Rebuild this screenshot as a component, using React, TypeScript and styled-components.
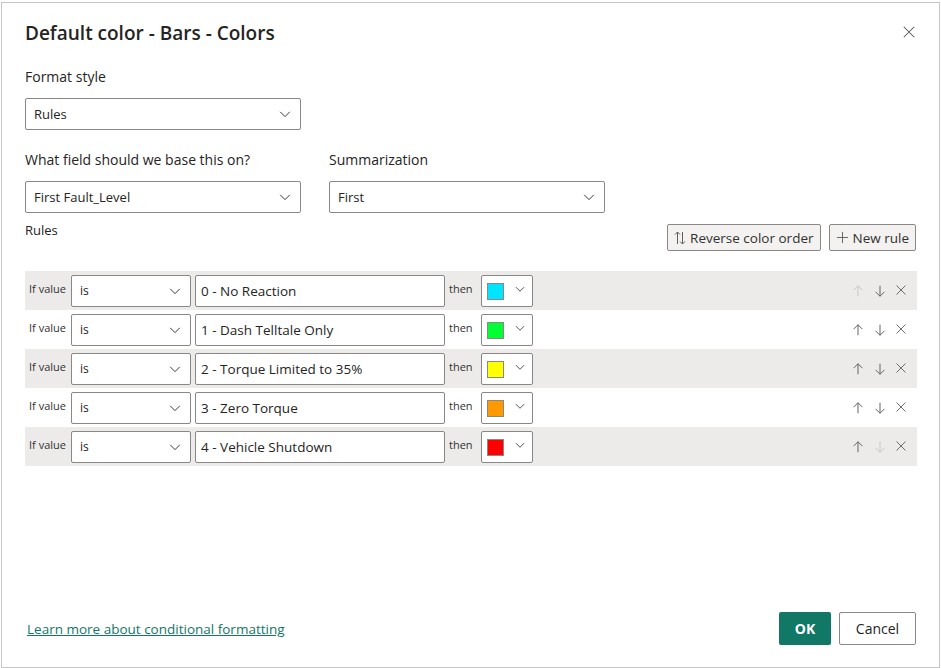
import React from "react";
import styled, { createGlobalStyle } from "styled-components";

const Global = createGlobalStyle`
  body { margin: 0; font-family: "Segoe UI", "Open Sans", "Noto Sans", sans-serif; color: #252423; background: #fff; }
`;

const Page = styled.div`
  width: 941px; height: 668px; box-sizing: border-box; padding-top: 2px; background: #fff; position: relative; overflow: hidden;
`;
const Dialog = styled.div`
  box-sizing: border-box; height: 666px; margin-left: 1px; width: 939px;
  border: 1px solid #c8c6c4; display: flex; flex-direction: column; padding: 0 23px 0 23px; position: relative;
`;
const Title = styled.h1`
  font-size: 19px; font-weight: 600; margin: 17px 0 0; line-height: 26px; color: #252423;
`;
const Close = styled.button`
  position: absolute; right: 20px; top: 20px; border: 0; background: none; padding: 0; width: 20px; height: 20px; color: #555;
`;
const Label = styled.div`
  font-size: 14px; line-height: 20px; color: #252423;
`;
const Field = styled.div<{ $mt: number }>`
  display: flex; flex-direction: column; gap: 11px; margin-top: ${p => p.$mt}px;
`;
const Select = styled.div<{ $w: number; $h?: number; $fs?: number }>`
  box-sizing: border-box; width: ${p => p.$w}px; height: ${p => p.$h ?? 32}px; border: 1px solid #8a8886; border-radius: 2px;
  background: #fff; display: flex; align-items: center; justify-content: space-between; padding: 0 8px 0 8px;
  font-size: ${p => p.$fs ?? 13}px; color: #252423;
`;
const Row2 = styled.div`
  display: flex; gap: 28px; margin-top: 20px;
`;
const RulesHead = styled.div`
  display: flex; justify-content: space-between; align-items: flex-end; margin-top: 8px;
`;
const Small = styled.div`font-size: 13px; margin-bottom: 12px;`;
const Btns = styled.div`display: flex; gap: 8px;`;
const Btn = styled.button`
  height: 27px; box-sizing: border-box; border: 1px solid #8a8886; border-radius: 2px; background: #f3f2f1;
  font-family: inherit; font-size: 13.5px; color: #323130; padding: 0 6px; display: flex; align-items: center; gap: 4px;
`;
const List = styled.div`margin-top: 20px; width: 892px;`;
const Rule = styled.div<{ $shade: boolean }>`
  height: 39px; background: ${p => p.$shade ? "#edebe9" : "#fff"}; display: flex; align-items: center; padding-left: 4px; box-sizing: border-box;
`;
const Tiny = styled.span<{ $w: number; $pl?: number }>`
  font-size: 11px; color: #323130; width: ${p => p.$w}px; padding-left: ${p => p.$pl ?? 0}px; box-sizing: border-box; flex-shrink: 0; margin-top: -4px;
`;
const TextBox = styled.div`
  box-sizing: border-box; width: 250px; height: 32px; border: 1px solid #8a8886; border-radius: 2px; background: #fff;
  font-size: 13.5px; display: flex; align-items: center; padding-left: 5px; margin-left: 4px;
`;
const ColorBox = styled.div`
  box-sizing: border-box; width: 52px; height: 32px; border: 1px solid #8a8886; border-radius: 2px; background: #fff;
  display: flex; align-items: flex-start; padding: 7px 0 0 5px; gap: 10px;
`;
const Swatch = styled.div<{ $c: string }>`
  width: 15px; height: 15px; background: ${p => p.$c}; border: 1px solid #8a8886;
`;
const Actions = styled.div`margin-left: auto; display: flex; gap: 8px; padding-right: 10px;`;
const Ic = styled.span<{ $off?: boolean }>`color: ${p => p.$off ? "#c8c6c4" : "#605e5c"}; display: flex;`;
const Footer = styled.div`
  margin-top: auto; margin-bottom: 22px; display: flex; align-items: center; justify-content: space-between; padding-left: 2px;
`;
const Link = styled.a`font-size: 13.5px; color: #117865; text-decoration: underline;`;
const Primary = styled.button`
  width: 52px; height: 33px; background: #117865; color: #fff; border: 0; border-radius: 2px; font-weight: 700; font-family: inherit; font-size: 14px;
`;
const Secondary = styled.button`
  width: 77px; height: 33px; background: #fff; color: #252423; border: 1px solid #8a8886; border-radius: 2px; font-family: inherit; font-size: 14px;
`;

const Chev = ({ s = 14 }: { s?: number }) => (
  <svg width={s} height={s} viewBox="0 0 16 16" fill="none" stroke="#323130" strokeWidth="1.1"><path d="M2.5 5.5l5.5 5.5 5.5-5.5" /></svg>
);
const Up = () => <svg width="14" height="14" viewBox="0 0 16 16" fill="none" stroke="currentColor" strokeWidth="1.1"><path d="M8 14V2M3 7l5-5 5 5" /></svg>;
const Down = () => <svg width="14" height="14" viewBox="0 0 16 16" fill="none" stroke="currentColor" strokeWidth="1.1"><path d="M8 2v12M3 9l5 5 5-5" /></svg>;
const X = ({ s = 12 }: { s?: number }) => <svg width={s} height={s} viewBox="0 0 16 16" fill="none" stroke="currentColor" strokeWidth="1.2"><path d="M2 2l12 12M14 2L2 14" /></svg>;

const rules = [
  ["0 - No Reaction", "#00e5ff"],
  ["1 - Dash Telltale Only", "#00ff33"],
  ["2 - Torque Limited to 35%", "#ffff00"],
  ["3 - Zero Torque", "#ff9900"],
  ["4 - Vehicle Shutdown", "#ff0000"],
];

export default function App() {
  return (
    <Page>
      <Global />
      <Dialog>
        <Title>Default color - Bars - Colors</Title>
        <Close><X s={14} /></Close>
        <Field $mt={21}>
          <Label>Format style</Label>
          <Select $w={276}>Rules<Chev /></Select>
        </Field>
        <Row2>
          <Field $mt={0}>
            <Label>What field should we base this on?</Label>
            <Select $w={276}>First Fault_Level<Chev /></Select>
          </Field>
          <Field $mt={0}>
            <Label>Summarization</Label>
            <Select $w={276}>First<Chev /></Select>
          </Field>
        </Row2>
        <RulesHead>
          <Small>Rules</Small>
          <Btns>
            <Btn><svg width="12" height="14" viewBox="0 0 12 14" fill="none" stroke="#605e5c" strokeWidth="1"><path d="M3.5 13V1M1 3.5l2.5-2.5 2.5 2.5M8.5 1v12M6 10.5l2.5 2.5 2.5-2.5" /></svg>Reverse color order</Btn>
            <Btn><svg width="13" height="13" viewBox="0 0 14 14" fill="none" stroke="#605e5c" strokeWidth="1"><path d="M7 1v12M1 7h12" /></svg>New rule</Btn>
          </Btns>
        </RulesHead>
        <List>
          {rules.map(([t, c], i) => (
            <Rule key={i} $shade={i % 2 === 0}>
              <Tiny $w={42}>If value</Tiny>
              <Select $w={120} $fs={12}>is<Chev /></Select>
              <TextBox>{t}</TextBox>
              <Tiny $w={36} $pl={4}>then</Tiny>
              <ColorBox><Swatch $c={c} /><Chev s={12} /></ColorBox>
              <Actions>
                <Ic $off={i === 0}><Up /></Ic>
                <Ic $off={i === rules.length - 1}><Down /></Ic>
                <Ic><X /></Ic>
              </Actions>
            </Rule>
          ))}
        </List>
        <Footer>
          <Link>Learn more about conditional formatting</Link>
          <Btns>
            <Primary>OK</Primary>
            <Secondary>Cancel</Secondary>
          </Btns>
        </Footer>
      </Dialog>
    </Page>
  );
}
